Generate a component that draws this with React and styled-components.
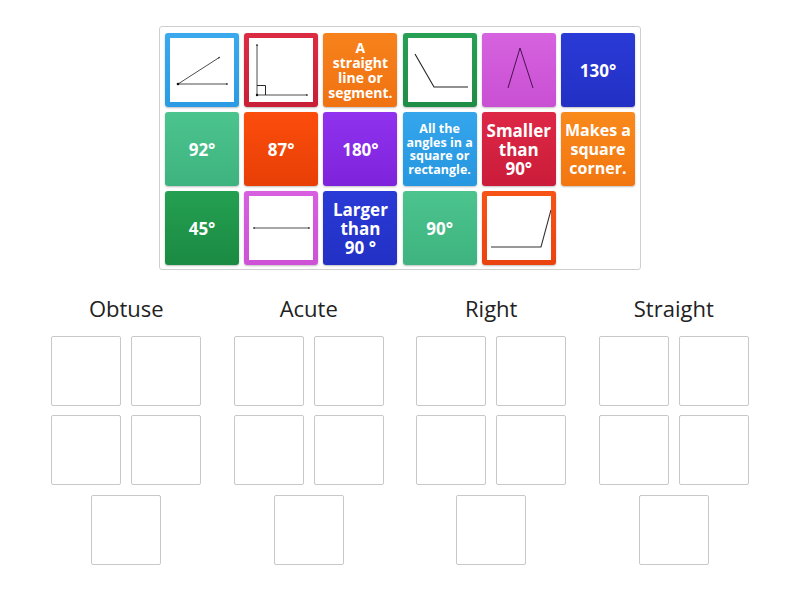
import React from 'react';
import styled, { createGlobalStyle, css } from 'styled-components';

const GlobalStyle = createGlobalStyle`
  html, body {
    margin: 0;
    padding: 0;
    background: #fff;
  }
  body {
    font-family: "Open Sans", "Liberation Sans", sans-serif;
  }
`;

const Page = styled.div`
  width: 800px;
  height: 600px;
  padding-top: 26px;
  box-sizing: border-box;
  display: flex;
  flex-direction: column;
  align-items: center;
`;

const Bank = styled.div`
  display: grid;
  grid-template-columns: repeat(6, 74px);
  grid-auto-rows: 74px;
  column-gap: 5.2px;
  row-gap: 5px;
  padding: 6px 5px 4px 5px;
  border: 1px solid #cfcfcf;
  border-radius: 3px;
`;

const Tile = styled.div`
  box-sizing: border-box;
  border-radius: 3px;
  background: linear-gradient(to bottom, ${(p) => p.$light}, ${(p) => p.$color});
  box-shadow: 0 1px 2px rgba(0, 0, 0, 0.25);
  display: flex;
  flex-direction: column;
  align-items: center;
  justify-content: center;
  text-align: center;
  color: #fff;
  font-weight: 700;
  font-size: ${(p) => p.$size || 17}px;
  line-height: ${(p) => p.$lh || 19}px;
  padding: 0;
  overflow: hidden;

  ${(p) => p.$framed
    && css`
      padding: 5px;
    `};
`;

const TextLine = styled.span`
  display: block;
  white-space: nowrap;
`;

const Frame = styled.div`
  width: 100%;
  height: 100%;
  background: #fff;
  overflow: hidden;

  svg {
    display: block;
  }
`;

const Board = styled.div`
  display: flex;
  gap: 32.5px;
  margin-top: 23px;
`;

const Column = styled.div`
  width: 150px;
  display: flex;
  flex-direction: column;
  align-items: center;
`;

const Heading = styled.div`
  font-size: 22px;
  line-height: 30px;
  color: #222;
  margin-bottom: 12.5px;
`;

const Slots = styled.div`
  display: flex;
  flex-wrap: wrap;
  justify-content: center;
  gap: 9.5px 10px;
  width: 150px;
`;

const Slot = styled.div`
  box-sizing: border-box;
  width: 70px;
  height: 70px;
  border: 1px solid #c8c8c8;
  border-radius: 2px;
  background: #fff;
`;

const ink = '#3a3a3a';

const Acute = () => (
  <svg width="64" height="64" viewBox="0 0 64 64">
    <line x1="8" y1="46" x2="58" y2="46" stroke={ink} strokeWidth="0.9" />
    <line x1="8" y1="46" x2="50" y2="19" stroke={ink} strokeWidth="0.9" />
    <circle cx="8" cy="46" r="1.3" fill="#111" />
    <path d="M58 46 l-2 -1 v2 z" fill={ink} />
    <path d="M50 19 l-2.2 0.4 l1 1.6 z" fill={ink} />
  </svg>
);

const RightAngle = () => (
  <svg width="64" height="64" viewBox="0 0 64 64">
    <line x1="8" y1="6" x2="8" y2="57" stroke={ink} strokeWidth="0.9" />
    <line x1="8" y1="57" x2="59" y2="57" stroke={ink} strokeWidth="0.9" />
    <polyline points="8,47.5 16.5,47.5 16.5,57" fill="none" stroke="#111" strokeWidth="0.9" />
    <circle cx="8" cy="57" r="1.2" fill="#111" />
    <path d="M8 6 l-1 2 h2 z" fill={ink} />
    <path d="M59 57 l-2 -1 v2 z" fill={ink} />
  </svg>
);

const Obtuse = () => (
  <svg width="64" height="64" viewBox="0 0 64 64">
    <polyline points="7,16 26,49 60,49" fill="none" stroke="#222" strokeWidth="1.1" />
  </svg>
);

const Narrow = () => (
  <svg width="74" height="74" viewBox="0 0 74 74">
    <polyline points="26,55 38,15 51,55" fill="none" stroke="#4a1150" strokeWidth="1" />
  </svg>
);

const Line = () => (
  <svg width="64" height="64" viewBox="0 0 64 64">
    <line x1="4" y1="32" x2="61" y2="32" stroke={ink} strokeWidth="0.9" />
    <path d="M4 32 l2 -1 v2 z" fill={ink} />
    <path d="M61 32 l-2 -1 v2 z" fill={ink} />
  </svg>
);

const Reflex = () => (
  <svg width="64" height="64" viewBox="0 0 64 64">
    <polyline points="4,51 54,51 64,14" fill="none" stroke="#333" strokeWidth="1.1" />
  </svg>
);

const tiles = [
  { framed: true, color: '#2a9be4', light: '#3aa9ee', art: <Acute /> },
  { framed: true, color: '#c81f36', light: '#dc2c44', art: <RightAngle /> },
  { lines: ['A', 'straight', 'line or', 'segment.'], color: '#f07212', light: '#f7821c', size: 14, lh: 15 },
  { framed: true, color: '#1f8d47', light: '#27a054', art: <Obtuse /> },
  { bare: true, color: '#c94fd3', light: '#d663df', art: <Narrow /> },
  { lines: ['130°'], color: '#2230c4', light: '#2a3ad6' },
  { lines: ['92°'], color: '#3eb37f', light: '#4cc48e' },
  { lines: ['87°'], color: '#e83f07', light: '#fb4d0c' },
  { lines: ['180°'], color: '#7e23dc', light: '#9032ee' },
  { lines: ['All the', 'angles in a', 'square or', 'rectangle.'], color: '#2697e0', light: '#35a6ec', size: 12.5, lh: 13.5 },
  { lines: ['Smaller', 'than', '90°'], color: '#ca1c3a', light: '#dd2846' },
  { lines: ['Makes a', 'square', 'corner.'], color: '#f27610', light: '#f98a1c', size: 16 },
  { lines: ['45°'], color: '#1b8a42', light: '#24a052' },
  { framed: true, color: '#cd52d6', light: '#d85fe0', art: <Line /> },
  { lines: ['Larger', 'than', '90 °'], color: '#2230c4', light: '#2a3ad6' },
  { lines: ['90°'], color: '#3eb37f', light: '#4cc48e' },
  { framed: true, color: '#ea4310', light: '#f75316', art: <Reflex /> },
];

const groups = ['Obtuse', 'Acute', 'Right', 'Straight'];

export default function App() {
  return (
    <Page>
      <GlobalStyle />
      <Bank>
        {tiles.map((t, i) => (
          <Tile
            key={i}
            $color={t.color}
            $light={t.light}
            $size={t.size}
            $lh={t.lh}
            $framed={t.framed}
          >
            {t.framed && <Frame>{t.art}</Frame>}
            {t.bare && t.art}
            {t.lines && t.lines.map((l) => <TextLine key={l}>{l}</TextLine>)}
          </Tile>
        ))}
      </Bank>
      <Board>
        {groups.map((g) => (
          <Column key={g}>
            <Heading>{g}</Heading>
            <Slots>
              {[0, 1, 2, 3, 4].map((n) => <Slot key={n} />)}
            </Slots>
          </Column>
        ))}
      </Board>
    </Page>
  );
}
